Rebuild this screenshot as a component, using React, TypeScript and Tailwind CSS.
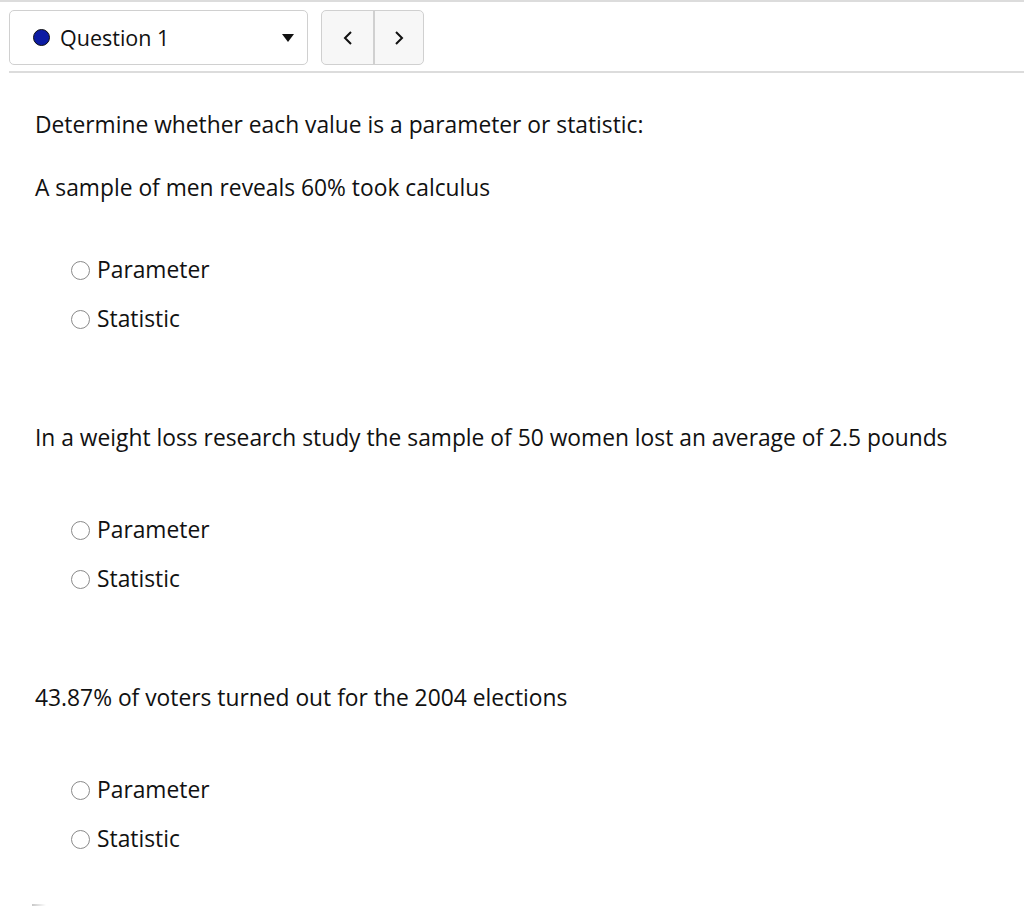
import { useState } from "react";

const questions = [
  "A sample of men reveals 60% took calculus",
  "In a weight loss research study the sample of 50 women lost an average of 2.5 pounds",
  "43.87% of voters turned out for the 2004 elections",
];

function Radio({ label, name, checked, onChange }: { label: string; name: string; checked: boolean; onChange: () => void }) {
  return (
    <label className="flex items-center h-[30px] cursor-pointer">
      <span
        onClick={onChange}
        className="w-[19px] h-[19px] rounded-full border border-[#8a8a8a] bg-white flex items-center justify-center"
      >
        {checked && <span className="w-[9px] h-[9px] rounded-full bg-[#1a1a1a]" />}
      </span>
      <span className="ml-[7px]">{label}</span>
      <input type="radio" name={name} className="hidden" checked={checked} onChange={onChange} />
    </label>
  );
}

export default function App() {
  const [answers, setAnswers] = useState<Record<number, string>>({});

  return (
    <div
      className="min-h-[917px] bg-white text-[#111] text-[22.8px] leading-[30px]"
      style={{ fontFamily: '"Open Sans", "Noto Sans", sans-serif' }}
    >
      <div className="border-t-2 border-[#dcdcdc] pl-[9px]">
        <div className="flex items-start pt-[8px] pb-[6px] border-b-2 border-[#dcdcdc]">
          <div className="w-[299px] h-[55px] rounded-[5px] border border-[#d0d0d0] flex items-center pl-[23px] pr-[13px]">
            <span className="w-[17px] h-[17px] rounded-full bg-[#0c1ba3] border border-[#111]" />
            <span className="ml-[10px] text-[21.5px] flex-1">Question 1</span>
            <svg width="12" height="8" viewBox="0 0 12 8">
              <path d="M0 0 L12 0 L6 8 Z" fill="#111" />
            </svg>
          </div>
          <div className="ml-[13px] w-[103px] h-[55px] rounded-[5px] border border-[#d0d0d0] bg-[#f7f7f7] flex">
            <button className="w-[51px] h-full flex items-center justify-center">
              <svg width="10" height="14" viewBox="0 0 10 14">
                <path d="M8 1 L2 7 L8 13" stroke="#111" strokeWidth="2" fill="none" />
              </svg>
            </button>
            <div className="w-[2px] h-full bg-[#d0d0d0]" />
            <button className="flex-1 h-full flex items-center justify-center">
              <svg width="10" height="14" viewBox="0 0 10 14">
                <path d="M2 1 L8 7 L2 13" stroke="#111" strokeWidth="2" fill="none" />
              </svg>
            </button>
          </div>
        </div>
      </div>

      <div className="pl-[35px]">
        <p className="mt-[37px]">Determine whether each value is a parameter or statistic:</p>
        {questions.map((q, i) => (
          <div key={i} className={i === 0 ? "mt-[33px]" : "mt-[89px]"}>
            <p>{q}</p>
            <div className={`pl-[36px] ${i === 0 ? "mt-[52px]" : "mt-[62px]"} flex flex-col gap-[19px]`}>
              {["Parameter", "Statistic"].map((opt) => (
                <Radio
                  key={opt}
                  label={opt}
                  name={`q${i}`}
                  checked={answers[i] === opt}
                  onChange={() => setAnswers({ ...answers, [i]: opt })}
                />
              ))}
            </div>
          </div>
        ))}
        <div className="mt-[50px] ml-[-3px] w-[14px] h-[2px] bg-gradient-to-r from-[#c8c8c8] to-white" />
      </div>
    </div>
  );
}
